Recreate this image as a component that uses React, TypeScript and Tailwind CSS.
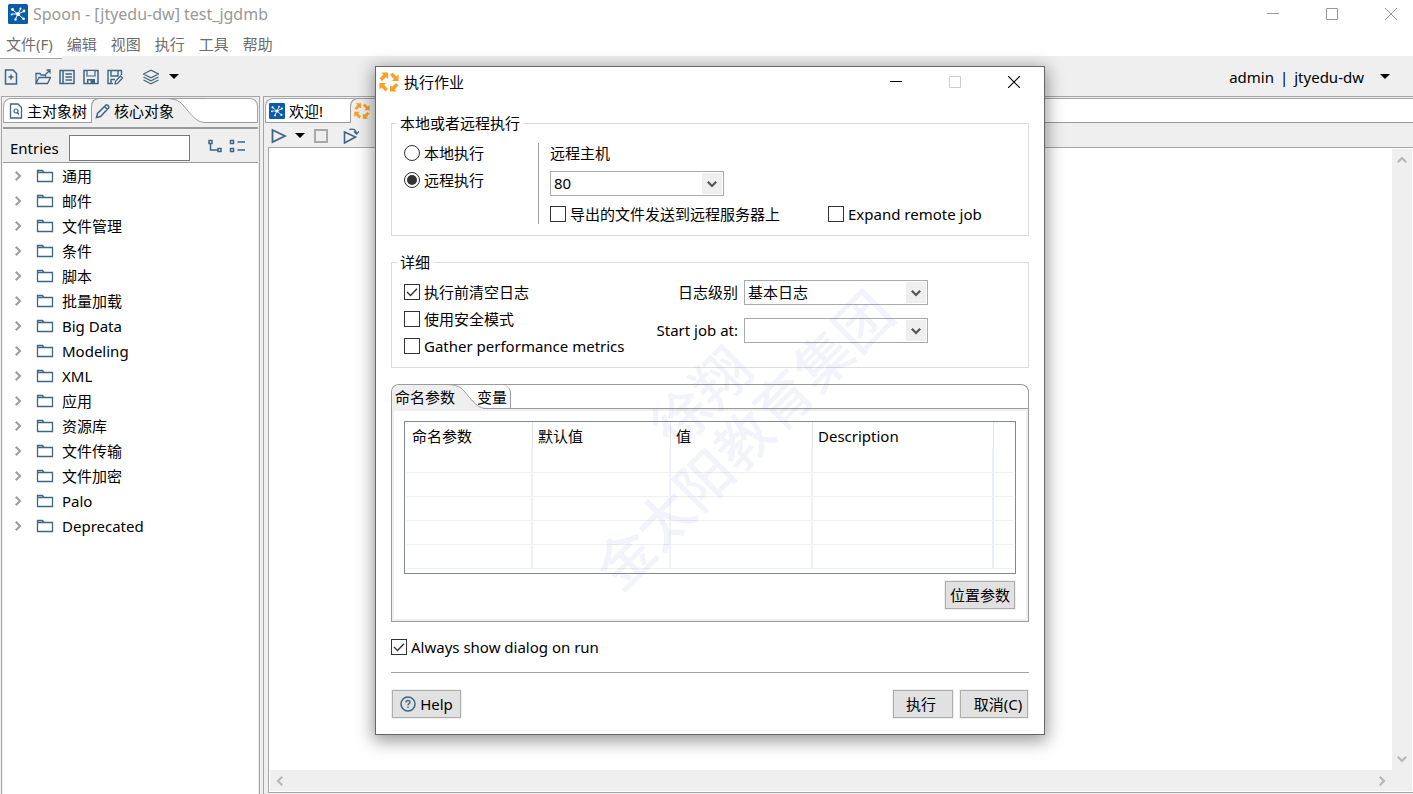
import React, { useState } from "react";

const INK = "#3f6684";

const treeItems = [
  "通用",
  "邮件",
  "文件管理",
  "条件",
  "脚本",
  "批量加载",
  "Big Data",
  "Modeling",
  "XML",
  "应用",
  "资源库",
  "文件传输",
  "文件加密",
  "Palo",
  "Deprecated",
];

const menuItems = ["文件(F)", "编辑", "视图", "执行", "工具", "帮助"];

const AppLogo = ({ className = "" }: { className?: string }) => (
  <svg viewBox="0 0 20 20" className={className} aria-hidden="true">
    <rect width="20" height="20" rx="1.5" fill="#0a5ca8" />
    <path
      d="M4.5 5.5l5 4.5M10 10l2.5-5M10 10l5.5-2.5M10 10l5 4.5M10 10l-2.5 5M10 10H4"
      stroke="#fff"
      strokeWidth="1"
    />
    <g fill="#fff">
      <circle cx="10" cy="10" r="2" />
      <circle cx="4.5" cy="5.5" r="1.4" />
      <circle cx="12.5" cy="4.5" r="1.1" />
      <circle cx="16" cy="7" r="1.4" />
      <circle cx="15.5" cy="14.8" r="1.4" />
      <circle cx="7.5" cy="15.5" r="1.2" />
      <circle cx="3.6" cy="10.5" r="1" />
    </g>
  </svg>
);

const arrow = "M2.4 0.4H9V7L6.9 5.2 3 8.9 0.6 6.5 4.400 2.600z";

const JobLogo = ({ className = "" }: { className?: string }) => (
  <svg viewBox="0 0 20 20" className={className} fill="#f7a02b" aria-hidden="true">
    <path d={arrow} />
    <path d={arrow} transform="rotate(90 10 10)" />
    <path d={arrow} transform="rotate(180 10 10)" />
    <path d={arrow} transform="rotate(270 10 10)" />
  </svg>
);

const Icon = ({ children, className = "size-4" }: { children: React.ReactNode; className?: string }) => (
  <svg
    viewBox="0 0 16 16"
    className={className}
    fill="none"
    stroke={INK}
    strokeWidth="1.5"
    aria-hidden="true"
  >
    {children}
  </svg>
);

const Caret = () => (
  <svg viewBox="0 0 10 5" className="w-2.5 h-[5px]" aria-hidden="true">
    <path d="M0 0h10L5 5z" fill="#000" />
  </svg>
);

const Chevron = ({ className = "" }: { className?: string }) => (
  <svg
    viewBox="0 0 10 10"
    className={`size-2.5 ${className}`}
    fill="none"
    stroke="currentColor"
    strokeWidth="2.2"
    aria-hidden="true"
  >
    <path d="M0.8 2.8L5 7l4.2-4.2" />
  </svg>
);

// slanted right side of the selected tab
const TabCurve = () => (
  <svg viewBox="0 0 40 25" className="h-[25px] w-10 shrink-0 -ml-2" aria-hidden="true">
    <path d="M0 0.5C14 0.5 16 6 22 13C28 20 32 24.5 40 24.5V25H0z" fill="#efefef" />
    <path d="M22 13C28 20 32 24.5 40 24.5L40 0H0C14 0.5 16 6 22 13z" fill="#fff" />
    <path d="M0 0.5C14 0.5 16 6 22 13C28 20 32 24.5 40 24.5" fill="none" stroke="#9b9b9b" />
    <path d="M0 0.5H40" stroke="#9b9b9b" />
  </svg>
);

type CheckProps = { label: string; defaultChecked?: boolean };

const Check = ({ label, defaultChecked = false }: CheckProps) => (
  <label className="flex items-center gap-1 h-[27px] whitespace-nowrap">
    <span className="relative size-4">
      <input
        type="checkbox"
        defaultChecked={defaultChecked}
        className="peer appearance-none block size-4 border border-[#333] bg-white"
      />
      <svg
        viewBox="0 0 16 16"
        className="absolute inset-0 hidden peer-checked:block pointer-events-none"
        fill="none"
        stroke="#333"
        strokeWidth="1.4"
      >
        <path d="M3 8l3.5 3.5L13 4.8" />
      </svg>
    </span>
    {label}
  </label>
);

const Radio = ({ label, defaultChecked = false }: CheckProps) => (
  <label className="flex items-center gap-1 h-[27px] whitespace-nowrap">
    <input
      type="radio"
      name="target"
      defaultChecked={defaultChecked}
      className="appearance-none size-4 rounded-full border border-[#333] bg-white bg-clip-content p-0.5 checked:bg-[#333]"
    />
    {label}
  </label>
);

const Select = ({ id, value, className = "" }: { id: string; value: string; className?: string }) => (
  <div className={`relative h-[25px] ${className}`}>
    <select
      id={id}
      defaultValue={value}
      className="appearance-none block w-full h-full border border-[#a9a9b0] bg-white pl-[3px] pr-6 leading-[23px]"
    >
      <option value={value}>{value}</option>
    </select>
    <span className="absolute right-0.5 top-0.5 bottom-0.5 w-5 bg-[#efefef] flex items-center justify-center text-[#555] pointer-events-none">
      <Chevron />
    </span>
  </div>
);

const dialogButton =
  "h-7 border border-[#adadad] bg-[#e1e1e1] outline outline-[#efefef] flex items-center justify-center";

const Sidebar = () => (
  <aside className="w-[259px] shrink-0 flex flex-col border border-b-0 border-[#a5a5a8] ml-px px-px pt-px bg-[#efefef]">
    <div className="flex h-[25px] rounded-t-lg bg-white border border-b-0 border-[#a5a5a8]">
      <button className="flex items-center gap-[3px] pl-1 w-[87px] shrink-0 border-b border-[#9b9b9b] whitespace-nowrap">
        <Icon>
          <path d="M2.5 1h7.5l3.5 3.5V15h-11z" strokeWidth="1.3" />
          <circle cx="8" cy="8" r="2" strokeWidth="1.2" />
          <path d="M9.3 9.5L11 11.5" strokeWidth="1.2" />
        </Icon>
        主对象树
      </button>
      <button className="-mt-px flex items-center gap-[3px] pl-[3px] h-[25px] shrink-0 rounded-tl-lg border-l border-t border-[#9b9b9b] bg-[#efefef] whitespace-nowrap">
        <Icon>
          <path d="M1.5 14.5l1-4L11 2c1-1 3.8 1.8 2.8 2.8L5.5 13.500zM9.5 3.5l3 3" />
        </Icon>
        <span className="relative z-10">核心对象</span>
      </button>
      <div className="-mt-px">
        <TabCurve />
      </div>
      <div className="flex-1 border-b border-[#9b9b9b]" />
    </div>
    <div className="h-[6px] border-b-2 border-[#9b9b9b]" />
    <div className="h-[34px] flex items-center border-b border-[#9b9b9b] pl-[7px] pt-1">
      <label htmlFor="entries" className="w-[59px]">
        Entries
      </label>
      <input id="entries" className="w-[121px] h-[26px] bg-white border border-[#7a7a7a] px-1" />
      <div className="flex gap-[6px] ml-[17px] -mt-1">
        <button aria-label="Expand">
          <Icon>
            <path d="M2 2.500h3v3H2zM11 10.500h3v3h-3zM3.500 6v6H11" />
          </Icon>
        </button>
        <button aria-label="Collapse">
          <Icon>
            <path d="M1.500 2.500h3v3h-3zM1.500 10.500h3v3h-3zM8.500 4H16M8.500 12H16" />
          </Icon>
        </button>
      </div>
    </div>
    <ul className="flex-1 bg-white">
      {treeItems.map((item) => (
        <li key={item} className="flex items-center h-[25px] pl-2.5">
          <Chevron className="-rotate-90 text-[#a0a0a0]" />
          <svg
            viewBox="0 0 18 14"
            className="w-[18px] h-3.5 ml-[13px] mr-2"
            fill="none"
            stroke={INK}
            strokeWidth="1.3"
            aria-hidden="true"
          >
            <path d="M1.500 12.500v-11h5l1.500 2h8.500v9zM1.500 3.500H8" />
          </svg>
          {item}
        </li>
      ))}
    </ul>
  </aside>
);

const Workspace = () => (
  <main className="flex-1 min-w-0 flex flex-col border-l border-t border-[#a5a5a8] ml-[3px] pl-px pt-px bg-[#efefef]">
    <div className="flex h-[25px] rounded-tl-lg bg-white border-t border-l border-[#a5a5a8]">
      <button className="flex items-center gap-1 pl-[3px] w-[84px] shrink-0 border-b border-[#9b9b9b] whitespace-nowrap">
        <AppLogo className="size-4" />
        欢迎!
      </button>
      <button
        aria-label="Job"
        className="-mt-px flex items-center pl-[3px] w-[120px] h-[25px] shrink-0 rounded-tl-lg border-l border-t border-[#9b9b9b] bg-[#efefef]"
      >
        <JobLogo className="size-4" />
      </button>
      <div className="flex-1 border-b border-[#9b9b9b]" />
    </div>
    <div className="h-6 flex items-center pl-[6px] pt-px">
      <button aria-label="Run">
        <Icon>
          <path d="M1.500 2l12.500 6-12.500 6z" strokeWidth="1.800" />
        </Icon>
      </button>
      <button aria-label="Run options" className="ml-2">
        <Caret />
      </button>
      <button aria-label="Stop" className="ml-2">
        <svg viewBox="0 0 16 16" className="size-4" fill="none" stroke="#a9a9a9" strokeWidth="2">
          <path d="M2 2h12v12H2z" />
        </svg>
      </button>
      <button aria-label="Replay" className="ml-3.5">
        <Icon>
          <path d="M1.500 4l11 5-11 6z" strokeWidth="1.600" />
          <path d="M6.500 1.500c4-1 6.500 0 7 4M11 3.500l2.500 2.500L16 3.500" strokeWidth="1.300" />
        </Icon>
      </button>
    </div>
    <div className="flex-1 ml-[3px] mb-px border-l border-t border-b border-[#a5a5a8] bg-white grid grid-cols-[1fr_21px] grid-rows-[1fr_22px]">
      <div />
      <div className="bg-[#efefef] mt-px mr-px flex flex-col items-center justify-between pt-[6px] pb-[6px] text-[#b8b8b8]">
        <Chevron className="rotate-180" />
        <Chevron />
      </div>
      <div className="bg-[#efefef] mb-px ml-px flex items-center justify-between px-[5px] text-[#b8b8b8]">
        <Chevron className="rotate-90" />
        <Chevron className="-rotate-90" />
      </div>
      <div className="bg-[#efefef] mb-px mr-px" />
    </div>
  </main>
);

const RunDialog = () => {
  const [tab, setTab] = useState(0);

  return (
    <div
      role="dialog"
      aria-label="执行作业"
      className="absolute left-[375px] top-[66px] w-[670px] bg-white border border-[#666] shadow-[0_4px_16px_2px_rgba(0,0,0,0.4)]"
    >
      <div className="h-[30px] flex items-center pl-[3px] pr-6">
        <JobLogo className="size-5 mr-[5px]" />
        <h2 className="flex-1">执行作业</h2>
        <div className="flex gap-[47px]">
          <button aria-label="Minimize">
            <svg viewBox="0 0 12 12" className="size-3" stroke="#000">
              <path d="M0 5.500h12" />
            </svg>
          </button>
          <button aria-label="Maximize" disabled>
            <svg viewBox="0 0 12 12" className="size-3" stroke="#ccc" fill="none">
              <path d="M0.500 0.500h11v11h-11z" />
            </svg>
          </button>
          <button aria-label="Close">
            <svg viewBox="0 0 12 12" className="size-3" stroke="#000" strokeWidth="1.100">
              <path d="M0 0l12 12M12 0L0 12" />
            </svg>
          </button>
        </div>
      </div>

      <div className="px-[15px] pt-[15px] pb-4">
        <fieldset className="border border-[#dcdcdc] min-w-0">
          <legend className="ml-[5px] px-[3px] leading-[22px]">本地或者远程执行</legend>
          <div className="flex pl-3">
            <div className="w-[134px] pt-[5px]">
              <Radio label="本地执行" />
              <Radio label="远程执行" defaultChecked />
            </div>
            <div className="w-px bg-[#a0a0a0] mt-[9px] mb-[11px]" />
            <div className="pl-[11px] pt-[6px] pb-2">
              <label htmlFor="host" className="block leading-[27px]">
                远程主机
              </label>
              <Select id="host" value="80" className="w-[174px] mt-1" />
              <div className="flex gap-12 mt-1">
                <Check label="导出的文件发送到远程服务器上" />
                <Check label="Expand remote job" />
              </div>
            </div>
          </div>
        </fieldset>

        <fieldset className="border border-[#dcdcdc] min-w-0 mt-[15px]">
          <legend className="ml-[5px] px-[3px] leading-[22px]">详细</legend>
          <div className="flex justify-between pl-3 pr-[100px] pt-[5px] pb-2">
            <div>
              <Check label="执行前清空日志" defaultChecked />
              <Check label="使用安全模式" />
              <Check label="Gather performance metrics" />
            </div>
            <div className="grid grid-cols-[auto_184px] gap-x-[6px] gap-y-[13px] content-start pt-0.5 text-right leading-[25px]">
              <label htmlFor="level">日志级别</label>
              <Select id="level" value="基本日志" />
              <label htmlFor="start">Start job at:</label>
              <Select id="start" value="" />
            </div>
          </div>
        </fieldset>

        <div className="mt-4">
          <div className="flex h-[25px] rounded-t-lg border border-b-0 border-[#9b9b9b] overflow-hidden">
            <button
              onClick={() => setTab(0)}
              aria-pressed={tab === 0}
              className="bg-[#efefef] pl-[3px] whitespace-nowrap shrink-0"
            >
              <span className="relative z-10">命名参数</span>
            </button>
            <div className="-mt-px -mr-2.5">
              <TabCurve />
            </div>
            <button
              onClick={() => setTab(1)}
              aria-pressed={tab === 1}
              className="relative border-r border-[#9b9b9b] rounded-tr-lg pr-[3px] whitespace-nowrap shrink-0"
            >
              变量
            </button>
            <div className="flex-1 border-b border-[#9b9b9b] -ml-7" />
          </div>
          <div className="border border-t-0 border-[#9b9b9b]">
            <div className="border-2 border-[#efefef] p-2.5">
              <div className="border border-[#828790] px-0.5 pb-1">
                <table className="w-full table-fixed border-separate border-spacing-0 text-left">
                  <colgroup>
                    <col className="w-[126px]" />
                    <col className="w-[138px]" />
                    <col className="w-[142px]" />
                    <col className="w-[181px]" />
                    <col />
                  </colgroup>
                  <thead>
                    <tr className="h-[27px]">
                      {["命名参数", "默认值", "值", "Description"].map((h) => (
                        <th
                          key={h}
                          className="font-normal p-0 pt-0.5 pl-[5px] border-r border-[#e5e5e5] leading-[25px]"
                        >
                          {h}
                        </th>
                      ))}
                      <th className="p-0" />
                    </tr>
                  </thead>
                  <tbody>
                    {[0, 1, 2, 3, 4].map((row) => (
                      <tr key={row} className="h-6">
                        <td className="p-0 border-b border-b-[#efefef] border-r-2 border-r-[#f0f2f9]" />
                        <td className="p-0 border-b border-b-[#efefef] border-r-2 border-r-[#f0f2f9]" />
                        <td className="p-0 border-b border-b-[#efefef] border-r-2 border-r-[#f0f2f9]" />
                        <td className="p-0 border-b border-b-[#efefef] border-r-2 border-r-[#eaeefb]" />
                        <td className="p-0 border-b border-b-[#efefef]" />
                      </tr>
                    ))}
                  </tbody>
                </table>
              </div>
              <div className="flex justify-end mt-[7px] pr-px">
                <button className={`${dialogButton} w-[70px]`}>位置参数</button>
              </div>
            </div>
          </div>
        </div>

        <div className="mt-[11px]">
          <Check label="Always show dialog on run" defaultChecked />
        </div>
        <hr className="mt-3 border-[#a0a0a0]" />
        <div className="flex gap-[7px] mt-[17px] px-px">
          <button className={`${dialogButton} w-[69px] gap-1`}>
            <Icon>
              <circle cx="8" cy="8" r="7" />
              <path d="M6 6.500c0-2.800 4-2.600 4-0.300 0 1.500-2 1.400-2 3M8 10.500v1.500" strokeWidth="1.400" />
            </Icon>
            Help
          </button>
          <div className="flex-1" />
          <button className={`${dialogButton} w-[60px] pr-1`}>执行</button>
          <button className={`${dialogButton} w-[68px] pl-2`}>取消(C)</button>
        </div>
      </div>

      <div className="absolute left-[346px] top-[351px] -translate-1/2 -rotate-45 text-center text-[56px] leading-[60px] font-medium whitespace-nowrap text-[#5a69c8]/7 pointer-events-none select-none">
        <div>徐翔</div>
        <div>金太阳教育集团</div>
      </div>
    </div>
  );
};

const App: React.FC = () => {
  return (
    <div className="relative h-screen min-h-[740px] flex flex-col overflow-hidden bg-white text-black text-[15px] leading-5 font-['Noto_Sans','Noto_Sans_CJK_SC',sans-serif]">
      <header className="h-[29px] shrink-0 flex items-center pl-2 pr-4 pb-px text-[#999]">
        <AppLogo className="size-5 mr-[5px]" />
        <h1 className="flex-1 text-base leading-5">Spoon - [jtyedu-dw] test_jgdmb</h1>
        <div className="flex gap-[47px]">
          <button aria-label="Minimize window">
            <svg viewBox="0 0 12 12" className="size-3" stroke="#999">
              <path d="M0 5.500h12" />
            </svg>
          </button>
          <button aria-label="Maximize window">
            <svg viewBox="0 0 12 12" className="size-3" stroke="#999" fill="none">
              <path d="M0.500 0.500h11v11h-11z" />
            </svg>
          </button>
          <button aria-label="Close window">
            <svg viewBox="0 0 12 12" className="size-3" stroke="#999">
              <path d="M0 0l12 12M12 0L0 12" />
            </svg>
          </button>
        </div>
      </header>

      <nav className="h-[27px] shrink-0 flex items-center gap-3.5 pl-[6px] pb-px pt-1 text-[#6d6d6d]">
        {menuItems.map((m) => (
          <button key={m}>{m}</button>
        ))}
      </nav>

      <div className="h-10 shrink-0 bg-[#efefef] flex flex-col">
        <div className="h-[3px] w-[62px] bg-white border-b border-[#a5a5a8]" />
        <div className="flex-1 flex items-center pl-[3px] pr-[23px] pb-0.5">
          <button aria-label="New">
            <Icon>
              <path d="M2.500 1h7.500l3.500 3.500V15h-11zM8 5.500v5M5.500 8h5" />
            </Icon>
          </button>
          <div className="flex gap-2 ml-4">
            <button aria-label="Open">
              <Icon>
                <path
                  d="M1 14.500V4.500h4l1 1.500h4.500v2.500M1 14.500l3-6H15.500l-3 6zM10.500 5.500L15 1M11.500 1H15v3.500"
                  strokeWidth="1.300"
                />
              </Icon>
            </button>
            <button aria-label="Explore">
              <Icon>
                <path d="M1 1.500h14v13H1zM4 1.500v13M6.500 5H13M6.500 8H13M6.500 11H13" />
              </Icon>
            </button>
            <button aria-label="Save">
              <Icon>
                <path d="M1 1.500h14v13H1z" />
                <path d="M4 1.500h8V7H4z" fill="#efefef" strokeWidth="1.200" />
                <path d="M4 10h8v4.500H4z" fill={INK} stroke="none" />
                <path d="M5.500 11.500h2V14h-2z" fill="#efefef" stroke="none" />
              </Icon>
            </button>
            <button aria-label="Save as">
              <Icon>
                <path d="M6 14.500H1v-13h13.500V6M4 1.500V7h7V1.500M4 14v-3.500h4" strokeWidth="1.400" />
                <path d="M8 15l0.500-2.800L13.500 7l2 2-5 5.500z" fill="#efefef" strokeWidth="1.300" />
              </Icon>
            </button>
          </div>
          <button aria-label="Perspective" className="flex items-center gap-2.5 ml-5">
            <Icon>
              <path
                d="M0.500 5L8 1.200 15.500 5 8 8.800zM0.500 8L8 11.800 15.500 8M0.500 11L8 14.800 15.500 11"
                strokeWidth="1.200"
              />
            </Icon>
            <Caret />
          </button>
          <div className="flex-1" />
          <span>admin</span>
          <span className="mx-[6px]">|</span>
          <button className="flex items-center gap-4">
            jtyedu-dw
            <Caret />
          </button>
        </div>
      </div>

      <div className="flex-1 min-h-0 flex bg-[#efefef]">
        <Sidebar />
        <Workspace />
      </div>

      <RunDialog />
    </div>
  );
};

export default App;
